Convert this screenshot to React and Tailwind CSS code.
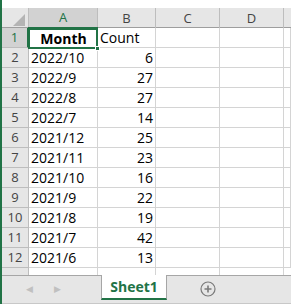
import React from "react";

const rows = [
  ["2022/10", 6],
  ["2022/9", 27],
  ["2022/8", 27],
  ["2022/7", 14],
  ["2021/12", 25],
  ["2021/11", 23],
  ["2021/10", 16],
  ["2021/9", 22],
  ["2021/8", 19],
  ["2021/7", 42],
  ["2021/6", 13],
];

const cols = "grid grid-cols-[27px_69px_58px_64px_64px_1fr]";
const cell = "h-5 border-r border-b border-[#d4d4d4] px-[2px] flex items-center";

const App = () => {
  return (
    <div
      className="w-[291px] h-[304px] overflow-hidden bg-white flex flex-col border-l-2 border-[#217346] text-[#000]"
      style={{ fontFamily: "'Open Sans', 'Liberation Sans', sans-serif" }}
    >
      <div className="h-2 bg-white" />

      {/* column headers */}
      <div className={`${cols} h-5 bg-[#e6e6e6] border-b border-[#9e9e9e] text-[13px] text-[#444]`}>
        <div className="relative border-r border-[#bdbdbd]">
          <div className="absolute right-[3px] bottom-[3px] w-0 h-0 border-l-[12px] border-l-transparent border-b-[12px] border-b-[#b4b4b4]" />
        </div>
        <div className="flex items-center justify-center bg-[#d2d2d2] text-[#217346] border-r border-[#bdbdbd] border-b-2 border-b-[#217346] -mb-px">
          A
        </div>
        <div className="flex items-center justify-center border-r border-[#bdbdbd]">B</div>
        <div className="flex items-center justify-center border-r border-[#bdbdbd]">C</div>
        <div className="flex items-center justify-center border-r border-[#bdbdbd]">D</div>
        <div />
      </div>

      {/* row 1 */}
      <div className={`${cols} text-[14px]`}>
        <div className="h-5 flex items-center justify-center bg-[#d2d2d2] text-[#217346] text-[13px] border-r-2 border-[#217346] border-b border-b-[#bdbdbd]">
          1
        </div>
        <div className="relative h-5 flex items-center justify-center font-bold">
          <div className="absolute -left-px -top-px w-[70px] h-[22px] border-2 border-[#217346]" />
          <div className="absolute -right-[2px] -bottom-[3px] w-[5px] h-[5px] bg-[#217346] border border-white" />
          Month
        </div>
        <div className={cell}>Count</div>
        <div className={cell} />
        <div className={cell} />
        <div className={cell} />
      </div>

      {rows.map(([m, c], i) => (
        <div key={m} className={`${cols} text-[14px]`}>
          <div className="h-5 flex items-center justify-center bg-[#e6e6e6] text-[#444] text-[13px] border-r border-b border-[#bdbdbd]">
            {i + 2}
          </div>
          <div className={cell}>{m}</div>
          <div className={`${cell} justify-end`}>{c}</div>
          <div className={cell} />
          <div className={cell} />
          <div className={cell} />
        </div>
      ))}

      {/* partial row 13 */}
      <div className={`${cols} h-[7px] overflow-hidden text-[14px]`}>
        <div className="bg-[#e6e6e6] border-r border-[#bdbdbd]" />
        <div className="border-r border-[#d4d4d4] px-[2px] leading-5 pt-[3px]">2021/5</div>
        <div className="border-r border-[#d4d4d4]" />
        <div className="border-r border-[#d4d4d4]" />
        <div className="border-r border-[#d4d4d4]" />
        <div />
      </div>

      {/* sheet tabs */}
      <div className="flex-1 flex items-start bg-[#e6e6e6] border-t border-[#a6a6a6] border-b border-b-[#c8c8c8]">
        <div className="w-[99px] h-[25px] flex items-center pl-[24px] text-[#c0c0c0] text-[9px]">
          <span className="w-[28px]">◀</span>
          <span className="w-[12px]">▶</span>
        </div>
        <div className="-mt-px w-[66px] h-[25px] bg-white border-x border-[#a6a6a6] border-b-2 border-b-[#217346] flex items-center justify-center text-[#217346] font-bold text-[14px]">
          Sheet1
        </div>
        <div className="flex-1 h-[25px] flex items-center pl-[33px]">
          <svg width="16" height="16" viewBox="0 0 16 16">
            <circle cx="8" cy="8" r="7" fill="none" stroke="#7a7a7a" strokeWidth="1.2" />
            <path d="M8 4.5v7M4.5 8h7" stroke="#7a7a7a" strokeWidth="1.6" />
          </svg>
        </div>
      </div>
    </div>
  );
};

export default App;
